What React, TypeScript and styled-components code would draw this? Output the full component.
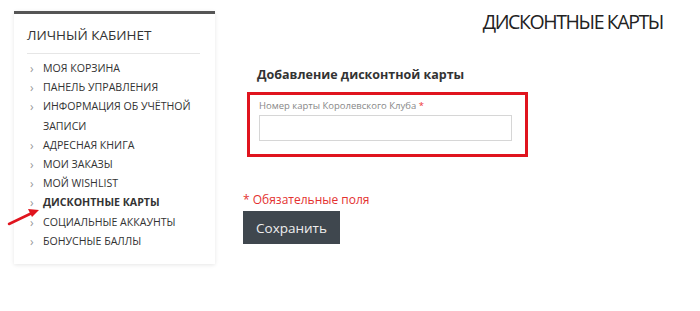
import React from "react";
import styled, { createGlobalStyle } from "styled-components";

const Global = createGlobalStyle`
  body {
    margin: 0;
    background: #fff;
    font-family: "Open Sans", "Liberation Sans", sans-serif;
    color: #333;
  }
`;

const Page = styled.div`
  display: flex;
  align-items: flex-start;
  width: 700px;
  height: 311px;
  position: relative;
  overflow: hidden;
`;

const Sidebar = styled.aside`
  width: 201px;
  margin: 11px 0 0 14px;
  border-top: 3px solid #555;
  box-shadow: 0 1px 4px rgba(0, 0, 0, 0.1);
  padding: 11px 15px 13px 13px;
  box-sizing: border-box;
`;

const SideTitle = styled.div`
  font-size: 13.5px;
  line-height: 20px;
  text-transform: uppercase;
  color: #333;
  padding-bottom: 8px;
  border-bottom: 1px solid #e6e6e6;
  margin-bottom: 5px;
`;

const Menu = styled.ul`
  list-style: none;
  margin: 0;
  padding: 0;
`;

const MenuItem = styled.li<{ $active?: boolean }>`
  display: flex;
  font-size: 10.6px;
  line-height: 19.2px;
  text-transform: uppercase;
  color: #333;
  font-weight: ${(p) => (p.$active ? 700 : 400)};

  &::before {
    content: "›";
    width: 16px;
    padding-left: 3px;
    box-sizing: border-box;
    flex: none;
    color: #999;
    font-weight: 400;
    font-size: 12px;
  }
`;

const Main = styled.main`
  flex: 1;
  padding: 8px 37px 0 28px;
`;

const PageTitle = styled.h1`
  margin: 0;
  text-align: right;
  font-size: 19.5px;
  font-weight: 400;
  letter-spacing: -1.4px;
  line-height: 28px;
  color: #222;
  text-transform: uppercase;
`;

const Form = styled.div`
  padding-top: 30px;
`;

const FormTitle = styled.h2`
  margin: 0 0 8px 14px;
  font-size: 12.5px;
  font-weight: 700;
  line-height: 18px;
  color: #333;
`;

const Highlight = styled.div`
  width: 281px;
  box-sizing: border-box;
  margin-left: 4px;
  border: 3px solid #e0141e;
  padding: 4px 13px 13px 9px;
`;

const Label = styled.label`
  display: block;
  font-size: 9.5px;
  line-height: 14px;
  color: #888;

  span {
    color: #e33;
  }
`;

const Input = styled.input`
  display: block;
  margin-top: 2px;
  width: 253px;
  height: 26px;
  box-sizing: border-box;
  border: 1px solid #d6d6d6;
  background: #fff;
`;

const Required = styled.div`
  margin-top: 35px;
  font-size: 12px;
  line-height: 16px;
  color: #e4312f;
`;

const SaveButton = styled.button`
  margin-top: 3px;
  width: 97px;
  height: 33px;
  border: none;
  background: #3f474e;
  color: #eee;
  font-family: "Open Sans", "Liberation Sans", sans-serif;
  font-size: 13.5px;
  padding: 0;
`;

const Arrow = styled.svg`
  position: absolute;
  left: 6px;
  top: 206px;
`;

const items = [
  "Моя корзина",
  "Панель управления",
  "Информация об учётной записи",
  "Адресная книга",
  "Мои заказы",
  "Мой Wishlist",
  "Дисконтные карты",
  "Социальные аккаунты",
  "Бонусные баллы",
];

export default function App() {
  return (
    <Page>
      <Global />
      <Sidebar>
        <SideTitle>Личный кабинет</SideTitle>
        <Menu>
          {items.map((t) => (
            <MenuItem key={t} $active={t === "Дисконтные карты"}>
              <span>{t}</span>
            </MenuItem>
          ))}
        </Menu>
      </Sidebar>
      <Main>
        <PageTitle>Дисконтные карты</PageTitle>
        <Form>
          <FormTitle>Добавление дисконтной карты</FormTitle>
          <Highlight>
            <Label>
              Номер карты Королевского Клуба <span>*</span>
            </Label>
            <Input />
          </Highlight>
          <Required>* Обязательные поля</Required>
          <SaveButton>Сохранить</SaveButton>
        </Form>
      </Main>
      <Arrow width="36" height="22" viewBox="0 0 36 22">
        <line x1="3" y1="18" x2="26" y2="7" stroke="#e0141e" strokeWidth="2.5" strokeLinecap="round" />
        <polygon points="33,4 22,3 26,11" fill="#e0141e" />
      </Arrow>
    </Page>
  );
}
